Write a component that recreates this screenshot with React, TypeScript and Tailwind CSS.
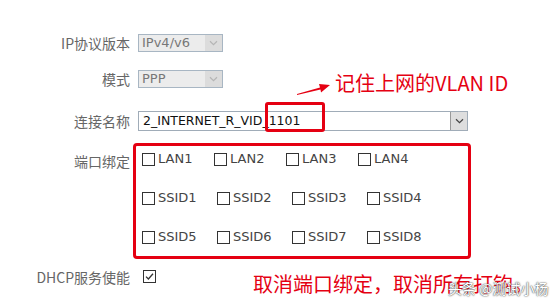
import React from "react"

const cjk = "font-['Noto_Sans_CJK_SC',sans-serif]"
const latin = "font-['DejaVu_Sans','Noto_Sans_CJK_SC',sans-serif]"

function Chevron({ color }: { color: string }) {
  return (
    <svg width="9" height="6" viewBox="0 0 9 6">
      <path d="M1 1.2 L4.5 4.6 L8 1.2" fill="none" stroke={color} strokeWidth="1.2" />
    </svg>
  )
}

function Box({ checked = false }: { checked?: boolean }) {
  return (
    <span className="flex h-[13px] w-[13px] shrink-0 items-center justify-center border border-[#333] bg-white">
      {checked && (
        <svg width="11" height="11" viewBox="0 0 11 11">
          <path d="M2 5.6 L4.4 8 L9 2.8" fill="none" stroke="#333" strokeWidth="1.3" />
        </svg>
      )}
    </span>
  )
}

function Label({ children }: { children: React.ReactNode }) {
  return (
    <div className={`w-[130px] shrink-0 text-right text-[14px] leading-none text-[#666] ${cjk}`}>
      {children}
    </div>
  )
}

function DisabledSelect({ value }: { value: string }) {
  return (
    <div className="ml-[8px] flex h-[18px] w-[85px] border border-[#a8b6c3] bg-[#ececec]">
      <div className={`flex-1 pl-[3px] text-[13px] leading-[16px] text-[#777] ${latin}`}>{value}</div>
      <div className="flex w-[17px] items-center justify-center bg-[#dcdcdc]">
        <Chevron color="#b5b5b5" />
      </div>
    </div>
  )
}

const lan = ["LAN1", "LAN2", "LAN3", "LAN4"]
const ssidA = ["SSID1", "SSID2", "SSID3", "SSID4"]
const ssidB = ["SSID5", "SSID6", "SSID7", "SSID8"]

function PortRow({ items, w }: { items: string[]; w: string }) {
  return (
    <div className="flex h-[26px] items-center">
      {items.map((it) => (
        <div key={it} className={`flex items-center gap-[3px] ${w}`}>
          <Box />
          <span className={`text-[13px] text-[#444] ${latin}`}>{it}</span>
        </div>
      ))}
    </div>
  )
}

export default function App() {
  return (
    <div className="relative h-[304px] w-[558px] overflow-hidden bg-white">
      <div className="flex flex-col pt-[34px]">
        <div className="flex h-[18px] items-center">
          <Label>IP协议版本</Label>
          <DisabledSelect value="IPv4/v6" />
        </div>

        <div className="mt-[18px] flex h-[18px] items-center">
          <Label>模式</Label>
          <DisabledSelect value="PPP" />
        </div>

        <div className="mt-[23px] flex h-[20px] items-center">
          <Label>连接名称</Label>
          <div className="ml-[8px] flex h-[20px] w-[330px] border border-[#a0acb8] bg-white">
            <div className={`flex-1 pl-[4px] text-[12.5px] leading-[18px] text-[#111] ${latin}`}>
              2_INTERNET_R_VID_1101
            </div>
            <div className="flex w-[17px] items-center justify-center border-l border-[#999] bg-[#dedede]">
              <Chevron color="#444" />
            </div>
          </div>
        </div>

        <div className="mt-[12px] flex items-start">
          <div className="pt-[11px]">
            <Label>端口绑定</Label>
          </div>
          <div className="ml-[3px] flex w-[338px] flex-col gap-[13px] rounded-[4px] border-[3px] border-[#e50012] pb-[6px] pl-[6px]">
            <PortRow items={lan} w="w-[72px]" />
            <PortRow items={ssidA} w="w-[75px]" />
            <PortRow items={ssidB} w="w-[75px]" />
          </div>
        </div>

        <div className="mt-[11px] flex h-[13px] items-center">
          <Label>DHCP服务使能</Label>
          <div className="ml-[13px]">
            <Box checked />
          </div>
          <div className={`ml-[97px] mt-[14px] text-[20px] leading-none text-[#e50012] ${cjk}`}>
            取消端口绑定，取消所有打钩。
          </div>
        </div>
      </div>

      {/* annotations */}
      <div className="absolute left-[265px] top-[102px] h-[30px] w-[60px] rounded-[3px] border-[3px] border-[#e50012]" />
      <svg className="absolute left-[296px] top-[80px]" width="36" height="18" viewBox="0 0 36 18">
        <polygon points="1,14 24,7.5 23,4 34,5 25,12.5 24.5,9.5 1,15" fill="#e50012" />
      </svg>
      <div className={`absolute left-[335px] top-[73px] text-[20px] leading-none text-[#e50012] ${cjk}`}>
        记住上网的VLAN ID
      </div>
      <div
        className={`absolute left-[448px] top-[281px] text-[14px] leading-none text-white [text-shadow:0_0_1px_#444,0_0_2px_#555] ${cjk}`}
      >
        头条 @测试小杨
      </div>
    </div>
  )
}
